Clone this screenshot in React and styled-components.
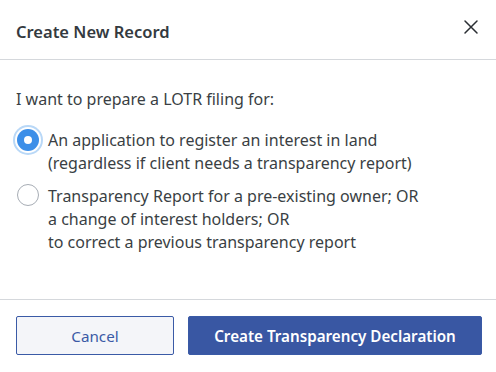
import React, { useState } from "react";
import styled, { createGlobalStyle } from "styled-components";

const GlobalStyle = createGlobalStyle`
  html, body {
    margin: 0;
    padding: 0;
    background: #ffffff;
  }
  body {
    font-family: "Noto Sans", "Open Sans", sans-serif;
  }
`;

const Modal = styled.div`
  width: 496px;
  height: 372px;
  display: flex;
  flex-direction: column;
  background: #ffffff;
  box-sizing: border-box;
`;

const Header = styled.div`
  height: 60px;
  display: flex;
  align-items: center;
  justify-content: space-between;
  padding: 0 13px 0 16px;
  border-bottom: 1px solid #d5d8dc;
  box-sizing: border-box;
`;

const Title = styled.h2`
  margin: 4px 0 0 0;
  font-size: 16.5px;
  font-weight: 600;
  color: #343a40;
`;

const CloseButton = styled.button`
  align-self: flex-start;
  margin-top: 15px;
  border: none;
  background: none;
  padding: 0;
  width: 24px;
  height: 24px;
  display: flex;
  align-items: center;
  justify-content: center;
  cursor: pointer;
  color: #2a2e33;
`;

const Body = styled.div`
  flex: 1;
  padding: 28px 16px 0 16px;
  border-bottom: 1px solid #d5d8dc;
  box-sizing: border-box;
`;

const Prompt = styled.p`
  margin: 0 0 18px 0;
  font-size: 16px;
  line-height: 23px;
  color: #3a3f44;
`;

const OptionList = styled.div`
  display: flex;
  flex-direction: column;
  gap: 10px;
`;

const Option = styled.label`
  display: flex;
  align-items: flex-start;
  gap: 9px;
  cursor: pointer;
`;

const RadioCircle = styled.span`
  flex: none;
  width: 22px;
  height: 22px;
  border-radius: 50%;
  box-sizing: border-box;
  margin-left: 1px;
  margin-top: ${(p) => (p.checked ? "0" : "-1px")};
  display: flex;
  align-items: center;
  justify-content: center;
  background: ${(p) => (p.checked ? "#3d8fe8" : "#ffffff")};
  border: ${(p) => (p.checked ? "none" : "1px solid #a7adb5")};
  box-shadow: ${(p) => (p.checked ? "0 0 0 2px #ffffff, 0 0 0 4px #b9d8f7" : "none")};

  &::after {
    content: "";
    display: ${(p) => (p.checked ? "block" : "none")};
    width: 8px;
    height: 8px;
    border-radius: 50%;
    background: #ffffff;
  }
`;

const OptionText = styled.span`
  font-size: 16px;
  line-height: 23px;
  color: #3a3f44;
`;

const Footer = styled.div`
  height: 72px;
  display: flex;
  gap: 14px;
  padding: 16px 14px 0 16px;
  box-sizing: border-box;
`;

const Button = styled.button`
  height: 39px;
  border-radius: 2px;
  font-family: "Noto Sans", "Open Sans", sans-serif;
  font-size: 15.2px;
  cursor: pointer;
  box-sizing: border-box;
  width: ${(p) => p.width}px;
  border: 1px solid #3a5aa6;
  background: ${(p) => (p.primary ? "#3957a3" : "#f4f5f9")};
  color: ${(p) => (p.primary ? "#ffffff" : "#3a5aa6")};
  font-weight: ${(p) => (p.primary ? 600 : 400)};
`;

const options = [
  {
    id: "application",
    lines: [
      "An application to register an interest in land",
      "(regardless if client needs a transparency report)",
    ],
  },
  {
    id: "report",
    lines: [
      "Transparency Report for a pre-existing owner; OR",
      "a change of interest holders; OR",
      "to correct a previous transparency report",
    ],
  },
];

const App = () => {
  const [selected, setSelected] = useState("application");

  return (
    <Modal>
      <GlobalStyle />
      <Header>
        <Title>Create New Record</Title>
        <CloseButton aria-label="Close">
          <svg width="16" height="16" viewBox="0 0 16 16" fill="none" stroke="currentColor" strokeWidth="1.5" strokeLinecap="round">
            <path d="M2 2 L14 14 M14 2 L2 14" />
          </svg>
        </CloseButton>
      </Header>
      <Body>
        <Prompt>I want to prepare a LOTR filing for:</Prompt>
        <OptionList>
          {options.map((o) => (
            <Option key={o.id} onClick={() => setSelected(o.id)}>
              <RadioCircle checked={selected === o.id} />
              <OptionText>
                {o.lines.map((l, i) => (
                  <React.Fragment key={i}>
                    {l}
                    {i < o.lines.length - 1 && <br />}
                  </React.Fragment>
                ))}
              </OptionText>
            </Option>
          ))}
        </OptionList>
      </Body>
      <Footer>
        <Button width={158}>Cancel</Button>
        <Button primary width={294}>Create Transparency Declaration</Button>
      </Footer>
    </Modal>
  );
};

export default App;
